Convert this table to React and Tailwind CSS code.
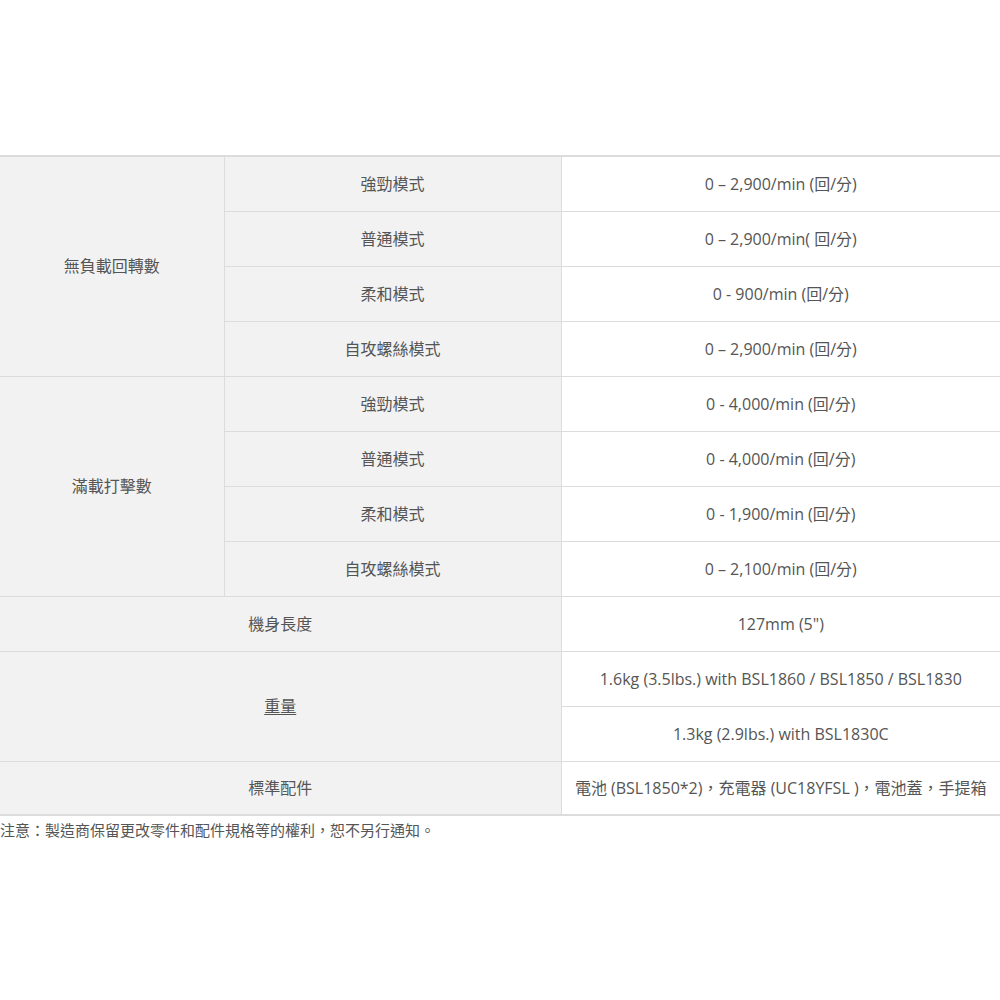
const rows = [
  { group: "無負載回轉數", mode: "強勁模式", value: "0 – 2,900/min (回/分)" },
  { mode: "普通模式", value: "0 – 2,900/min( 回/分)" },
  { mode: "柔和模式", value: "0 - 900/min (回/分)" },
  { mode: "自攻螺絲模式", value: "0 – 2,900/min (回/分)" },
  { group: "滿載打擊數", mode: "強勁模式", value: "0 - 4,000/min (回/分)" },
  { mode: "普通模式", value: "0 - 4,000/min (回/分)" },
  { mode: "柔和模式", value: "0 - 1,900/min (回/分)" },
  { mode: "自攻螺絲模式", value: "0 – 2,100/min (回/分)" },
];

const label = "bg-[#f2f2f2] border border-[#dcdcdc] text-center align-middle";
const val = "bg-white border border-[#dcdcdc] text-center align-middle";

const App = () => {
  return (
    <div
      className="w-[1000px] min-h-[1000px] bg-white pt-[155px] text-[#555]"
      style={{ fontFamily: '"Open Sans", "Noto Sans CJK TC", sans-serif' }}
    >
      <table className="w-full table-fixed border-collapse border-y-2 border-[#dcdcdc] text-[16px]">
        <colgroup>
          <col className="w-[224px]" />
          <col className="w-[337px]" />
          <col />
        </colgroup>
        <tbody>
          {rows.map((r, i) => (
            <tr key={i} className="h-[55px]">
              {r.group && (
                <td rowSpan={4} className={label + " border-l-0"}>{r.group}</td>
              )}
              <td className={label}>{r.mode}</td>
              <td className={val + " border-r-0"}>{r.value}</td>
            </tr>
          ))}
          <tr className="h-[55px]">
            <td colSpan={2} className={label + " border-l-0"}>機身長度</td>
            <td className={val + " border-r-0"}>127mm (5")</td>
          </tr>
          <tr className="h-[55px]">
            <td colSpan={2} rowSpan={2} className={label + " border-l-0"}>
              <span className="underline underline-offset-2">重量</span>
            </td>
            <td className={val + " border-r-0"}>1.6kg (3.5lbs.) with BSL1860 / BSL1850 / BSL1830</td>
          </tr>
          <tr className="h-[55px]">
            <td className={val + " border-r-0"}>1.3kg (2.9lbs.) with BSL1830C</td>
          </tr>
          <tr className="h-[54px]">
            <td colSpan={2} className={label + " border-l-0"}>標準配件</td>
            <td className={val + " border-r-0"}>電池 (BSL1850*2)，充電器 (UC18YFSL )，電池蓋，手提箱</td>
          </tr>
        </tbody>
      </table>
      <p className="text-[15px] mt-[4px] leading-[20px]">注意：製造商保留更改零件和配件規格等的權利，恕不另行通知。</p>
    </div>
  );
};

export default App;
